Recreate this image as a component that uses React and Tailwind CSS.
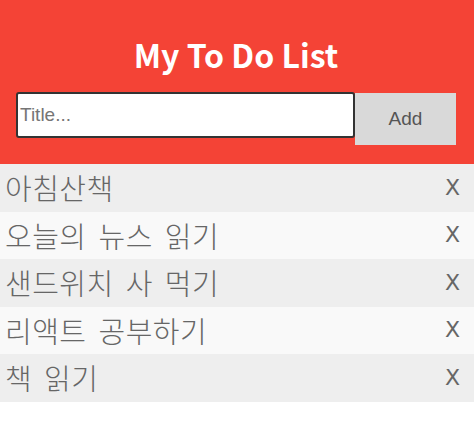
export default function App() {
  const items = ["아침산책", "오늘의 뉴스 읽기", "샌드위치 사 먹기", "리액트 공부하기", "책 읽기"];

  return (
    <div className="w-[474px] min-h-[439px] bg-white" style={{ fontFamily: '"Noto Sans CJK KR", "Noto Sans", sans-serif' }}>
      <div className="bg-[#f44336] pl-4 pr-[18px] pt-[32px] pb-[19px]">
        <h2 className="text-center text-white font-bold text-[32px] leading-[44px]">My To Do List</h2>
        <div className="flex items-start mt-[16px]">
          <input
            placeholder="Title..."
            className="flex-1 h-[46px] bg-white border-2 border-[#333] rounded-[3px] px-0.5 text-[19px] placeholder:text-[#757575] outline-none"
            style={{ fontFamily: '"Liberation Sans", sans-serif' }}
          />
          <button
            className="w-[101px] h-[52px] bg-[#d9d9d9] text-[#555] text-[19px] mt-px"
            style={{ fontFamily: '"Liberation Sans", sans-serif' }}
          >
            Add
          </button>
        </div>
      </div>
      <ul>
        {items.map((t, i) => (
          <li
            key={t}
            className={`flex items-center justify-between h-[47.5px] pl-[5px] pr-[14px] text-[29px] font-light text-[#666] ${
              i % 2 === 0 ? "bg-[#eee]" : "bg-[#f9f9f9]"
            }`}
          >
            <span className="leading-none tracking-[0.5px] [word-spacing:5px]">{t}</span>
            <span className="text-[22px] text-[#666] leading-none font-normal" style={{ fontFamily: '"DejaVu Sans", sans-serif' }}>X</span>
          </li>
        ))}
      </ul>
    </div>
  );
}
